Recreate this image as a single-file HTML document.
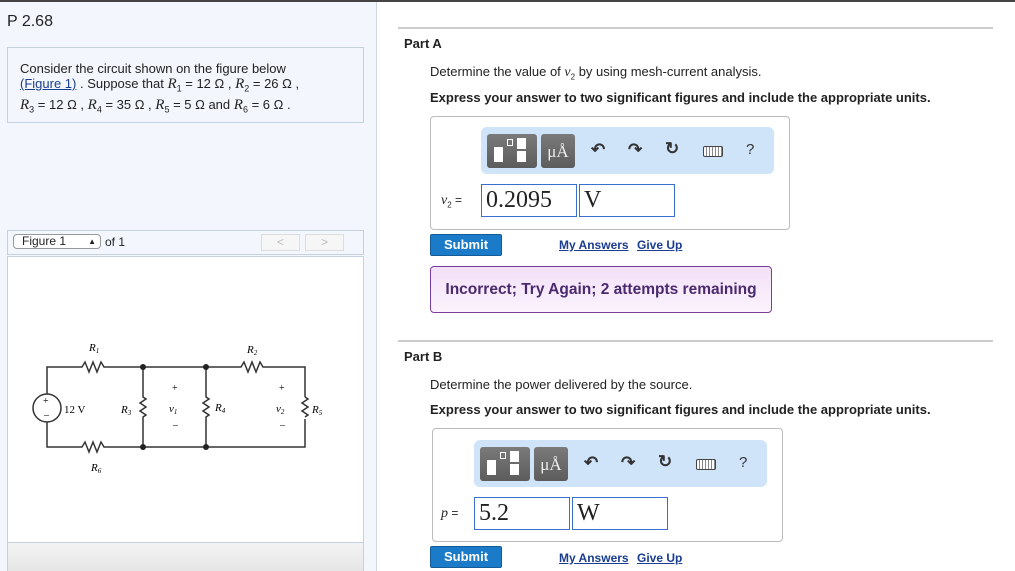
<!DOCTYPE html>
<html><head><meta charset="utf-8"><style>
*{margin:0;padding:0;box-sizing:border-box}
body{width:1015px;height:571px;overflow:hidden;background:#fff;font-family:"Liberation Sans",Arial,sans-serif;color:#222;position:relative}
.a{position:absolute}
.m{font-family:"Liberation Serif",serif;font-style:italic}
.tb{position:absolute;background:#cfe3f9;border-radius:6px}
.db{position:absolute;background:linear-gradient(#7a7a7a,#5c5c5c);border-radius:3px}
.inp{position:absolute;border:1px solid #3a6fd0;background:#fff;font-family:"Liberation Serif",serif;font-size:24px;padding-left:4px;line-height:30px}
.sub{position:absolute;background:#1b7bc9;border:1px solid #145c98;border-radius:2px;color:#fff;font-weight:bold;font-size:13px;text-align:center;line-height:20px}
.lk{position:absolute;color:#1a3d8f;font-weight:bold;font-size:12px;text-decoration:underline}
.ic{position:absolute;font-size:17px;color:#333;font-weight:bold}
</style></head><body>
<div class="a" style="left:0;top:0;width:1015px;height:2px;background:#444"></div>
<div class="a" style="left:0;top:2px;width:377px;height:569px;background:#f3f7fd;border-right:1px solid #cdd7e3"></div>
<div class="a" style="left:7px;top:13px;font-size:16px">P 2.68</div>
<div class="a" style="left:7px;top:47px;width:357px;height:76px;border:1px solid #c4d2e0;background:#f3f7fd"></div>
<div class="a" style="left:20px;top:61px;font-size:13px;line-height:15px;width:344px;white-space:nowrap">Consider the circuit shown on the figure below<br><span style="color:#1a3d8f;text-decoration:underline">(Figure 1)</span> . Suppose that <span class="m" style="font-size:15px">R</span><sub style="font-size:9px">1</sub> = 12 Ω , <span class="m" style="font-size:15px">R</span><sub style="font-size:9px">2</sub> = 26 Ω ,<br><span class="m" style="font-size:15px">R</span><sub style="font-size:9px">3</sub> = 12 Ω , <span class="m" style="font-size:15px">R</span><sub style="font-size:9px">4</sub> = 35 Ω , <span class="m" style="font-size:15px">R</span><sub style="font-size:9px">5</sub> = 5 Ω and <span class="m" style="font-size:15px">R</span><sub style="font-size:9px">6</sub> = 6 Ω .</div>
<div class="a" style="left:7px;top:230px;width:357px;height:25px;border:1px solid #c4d2e0;background:#f3f7fd"></div>
<div class="a" style="left:13px;top:234px;width:88px;height:15px;border:1px solid #999;border-radius:4px;background:#fff;font-size:12px;padding-left:8px;line-height:13px">Figure 1<span style="position:absolute;right:4px;top:0;font-size:8px">▲</span></div>
<div class="a" style="left:105px;top:235px;font-size:12px">of 1</div>
<div class="a" style="left:261px;top:234px;width:39px;height:17px;border:1px solid #ddd;background:#f6f6f6;color:#bbb;text-align:center;font-size:12px">&lt;</div>
<div class="a" style="left:305px;top:234px;width:39px;height:17px;border:1px solid #ddd;background:#f6f6f6;color:#bbb;text-align:center;font-size:12px">&gt;</div>
<div class="a" style="left:7px;top:256px;width:357px;height:315px;border:1px solid #c4d2e0;background:#fff"></div>
<div class="a" style="left:8px;top:542px;width:355px;height:29px;background:linear-gradient(#f3f3f3,#e6e6e6);border-top:1px solid #c4d2e0"></div>
<svg class="a" style="left:0;top:320px" width="380" height="180" viewBox="0 0 380 180" font-family="Liberation Serif" font-style="italic" font-size="11">
<g stroke="#333" stroke-width="1.5" fill="none">
<path d="M47 74V47H82l3-5 4 10 4-10 4 10 4-10 3 5H241l3-5 4 10 4-10 4 10 4-10 3 5H305v30"/>
<path d="M47 102v25H82l3-5 4 10 4-10 4 10 4-10 3 5H305V99"/>
<circle cx="47" cy="88" r="14"/>
<path d="M143 47v30l3 2-6 4 6 4-6 4 6 4-3 2v30"/>
<path d="M206 47v30l3 2-6 4 6 4-6 4 6 4-3 2v30"/>
<path d="M305 77l3 2-6 4 6 4-6 4 6 4-3 2"/>
</g>
<g fill="#222"><circle cx="143" cy="47" r="3"/><circle cx="206" cy="47" r="3"/><circle cx="143" cy="127" r="3"/><circle cx="206" cy="127" r="3"/></g>
<g font-style="normal" font-size="10"><text x="43" y="84">+</text><text x="44" y="98">–</text><text x="172" y="71">+</text><text x="173" y="108">–</text><text x="279" y="71">+</text><text x="280" y="108">–</text><text x="64" y="93" font-size="11">12 V</text></g>
<text x="89" y="31">R<tspan font-size="7" dy="2">1</tspan></text>
<text x="247" y="33">R<tspan font-size="7" dy="2">2</tspan></text>
<text x="121" y="93">R<tspan font-size="7" dy="2">3</tspan></text>
<text x="215" y="91">R<tspan font-size="7" dy="2">4</tspan></text>
<text x="312" y="93">R<tspan font-size="7" dy="2">5</tspan></text>
<text x="91" y="151">R<tspan font-size="7" dy="2">6</tspan></text>
<text x="169" y="92">v<tspan font-size="7" dy="2">1</tspan></text>
<text x="276" y="92">v<tspan font-size="7" dy="2">2</tspan></text>
</svg>

<div class="a" style="left:398px;top:27px;width:595px;height:2px;background:#ccc"></div>
<div class="a" style="left:404px;top:36px;font-size:13px;font-weight:bold">Part A</div>
<div class="a" style="left:430px;top:64px;font-size:13px">Determine the value of <span class="m" style="font-size:14px">v</span><sub style="font-size:8px">2</sub> by using mesh-current analysis.</div>
<div class="a" style="left:430px;top:90px;font-size:13px;font-weight:bold">Express your answer to two significant figures and include the appropriate units.</div>
<div class="a" style="left:430px;top:116px;width:360px;height:114px;border:1px solid #bbb;border-radius:4px"></div>
<div class="tb" style="left:481px;top:127px;width:293px;height:47px"></div>
<div class="db" style="left:487px;top:134px;width:50px;height:34px"></div>
<div class="a" style="left:494px;top:147px;width:9px;height:15px;background:#fff"></div>
<div class="a" style="left:507px;top:139px;width:6px;height:7px;border:1px solid #fff"></div>
<div class="a" style="left:517px;top:138px;width:9px;height:11px;background:#fff"></div>
<div class="a" style="left:517px;top:151px;width:9px;height:11px;background:#fff"></div>
<div class="db" style="left:541px;top:134px;width:34px;height:34px;color:#eee;font-family:'Liberation Serif',serif;font-size:17px;text-align:center;line-height:36px">μÅ</div>
<div class="ic" style="left:591px;top:140px">↶</div>
<div class="ic" style="left:628px;top:140px">↷</div>
<div class="ic" style="left:665px;top:139px">↻</div>
<div class="a" style="left:703px;top:146px;width:20px;height:11px;border:1.5px solid #444;border-radius:2px;background:repeating-linear-gradient(90deg,#fff 0 2px,#888 2px 3px)"></div>
<div class="ic" style="left:746px;top:141px;font-size:15px;font-weight:normal">?</div>
<div class="a" style="left:441px;top:193px;font-size:12px"><span class="m" style="font-size:14px">v</span><sub style="font-size:8px">2</sub> =</div>
<div class="inp" style="left:481px;top:184px;width:96px;height:33px">0.2095</div>
<div class="inp" style="left:579px;top:184px;width:96px;height:33px">V</div>
<div class="sub" style="left:430px;top:234px;width:72px;height:22px">Submit</div>
<div class="lk" style="left:559px;top:238px">My Answers</div>
<div class="lk" style="left:637px;top:238px">Give Up</div>
<div class="a" style="left:430px;top:266px;width:342px;height:47px;border:1px solid #7a3e9a;border-radius:4px;background:linear-gradient(#f3e0f8,#fbf3fd);color:#4a2a6e;font-weight:bold;font-size:15.5px;text-align:center;line-height:45px">Incorrect; Try Again; 2 attempts remaining</div>

<div class="a" style="left:398px;top:340px;width:595px;height:2px;background:#ccc"></div>
<div class="a" style="left:404px;top:349px;font-size:13px;font-weight:bold">Part B</div>
<div class="a" style="left:430px;top:377px;font-size:13px">Determine the power delivered by the source.</div>
<div class="a" style="left:430px;top:402px;font-size:13px;font-weight:bold">Express your answer to two significant figures and include the appropriate units.</div>
<div class="a" style="left:432px;top:428px;width:351px;height:114px;border:1px solid #bbb;border-radius:4px"></div>
<div class="tb" style="left:474px;top:440px;width:293px;height:47px"></div>
<div class="db" style="left:480px;top:447px;width:50px;height:34px"></div>
<div class="a" style="left:487px;top:460px;width:9px;height:15px;background:#fff"></div>
<div class="a" style="left:500px;top:452px;width:6px;height:7px;border:1px solid #fff"></div>
<div class="a" style="left:510px;top:451px;width:9px;height:11px;background:#fff"></div>
<div class="a" style="left:510px;top:464px;width:9px;height:11px;background:#fff"></div>
<div class="db" style="left:534px;top:447px;width:34px;height:34px;color:#eee;font-family:'Liberation Serif',serif;font-size:17px;text-align:center;line-height:36px">μÅ</div>
<div class="ic" style="left:584px;top:453px">↶</div>
<div class="ic" style="left:621px;top:453px">↷</div>
<div class="ic" style="left:658px;top:452px">↻</div>
<div class="a" style="left:696px;top:459px;width:20px;height:11px;border:1.5px solid #444;border-radius:2px;background:repeating-linear-gradient(90deg,#fff 0 2px,#888 2px 3px)"></div>
<div class="ic" style="left:739px;top:454px;font-size:15px;font-weight:normal">?</div>
<div class="a" style="left:441px;top:506px;font-size:12px"><span class="m" style="font-size:14px">p</span> =</div>
<div class="inp" style="left:474px;top:497px;width:96px;height:33px">5.2</div>
<div class="inp" style="left:572px;top:497px;width:96px;height:33px">W</div>
<div class="sub" style="left:430px;top:546px;width:72px;height:22px">Submit</div>
<div class="lk" style="left:559px;top:551px">My Answers</div>
<div class="lk" style="left:637px;top:551px">Give Up</div>
</body></html>
